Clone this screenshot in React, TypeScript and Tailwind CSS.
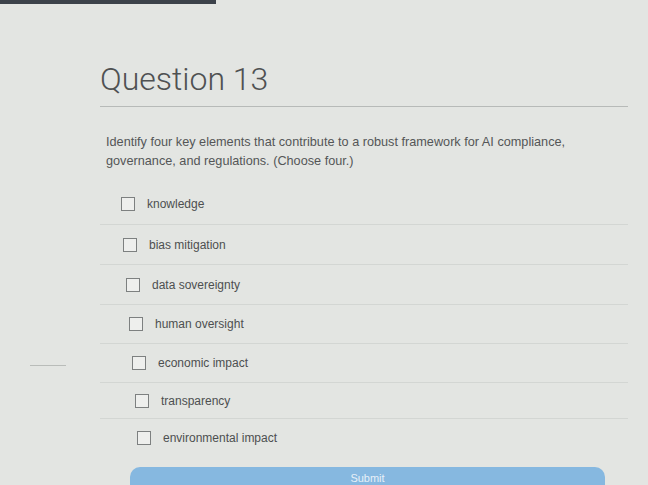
import React from "react";

const options = [
  { label: "knowledge", ml: "ml-[21px]", h: "h-[40px]" },
  { label: "bias mitigation", ml: "ml-[23px]", h: "h-[39px]" },
  { label: "data sovereignty", ml: "ml-[26px]", h: "h-[39px]" },
  { label: "human oversight", ml: "ml-[29px]", h: "h-[38px]" },
  { label: "economic impact", ml: "ml-[32px]", h: "h-[38px]" },
  { label: "transparency", ml: "ml-[35px]", h: "h-[35px]" },
  { label: "environmental impact", ml: "ml-[37px]", h: "h-[37px]" },
];

export default function App() {
  return (
    <div className="relative w-[648px] h-[485px] overflow-hidden bg-[#e3e5e2] font-['Liberation_Sans',Arial,sans-serif]">
      <div className="h-[4px] w-[216px] bg-[#3c424a]" />
      <div className="absolute left-[30px] top-[365px] h-px w-[36px] bg-[#b9bcb9]" />
      <div className="pl-[100px] pr-[20px] pt-[56px]">
        <h1 className="font-['Roboto',sans-serif] font-light text-[32px] leading-[38px] text-[#4f5152]">
          Question 13
        </h1>
        <div className="mt-[8px] h-px bg-[#b7bab8]" />
        <div className="ml-[6px] mt-[26px] text-[12.7px] leading-[19px] text-[#545657]">
          <p>Identify four key elements that contribute to a robust framework for AI compliance,</p>
          <p>governance, and regulations. (Choose four.)</p>
        </div>
        <div className="mt-[13px] flex flex-col">
          {options.map((o, i) => (
            <div key={o.label} className={i === 0 ? "" : "border-t border-[#d3d6d3]"}>
              <div className={`${o.ml} ${o.h} flex items-center gap-[12px]`}>
                <span className="h-[14px] w-[14px] border border-[#7d8080] bg-[#eeefed]" />
                <span className="text-[12px] text-[#4d4f50]">{o.label}</span>
              </div>
            </div>
          ))}
        </div>
        <div className="ml-[30px] mr-[23px] mt-[11px] flex h-[30px] justify-center rounded-[10px] bg-[#86b8e0] pt-[3px]">
          <span className="text-[11px] text-[#e6f0f8]">Submit</span>
        </div>
      </div>
    </div>
  );
}
